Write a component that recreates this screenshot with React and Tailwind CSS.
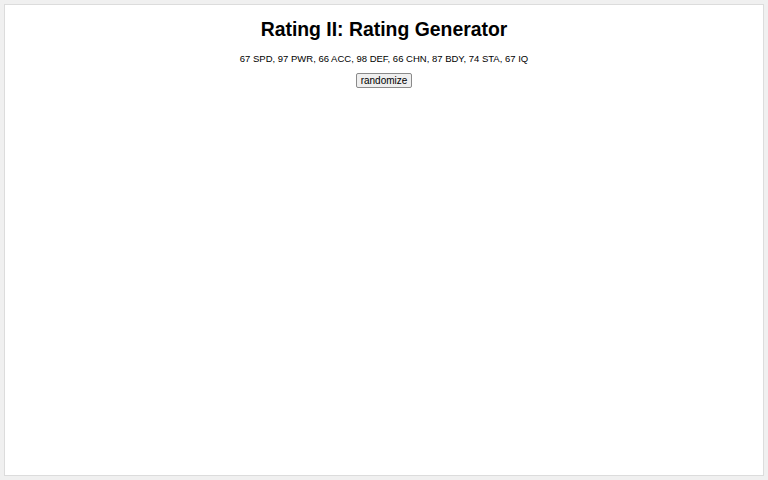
export default function App() {
  return (
    <div className="h-[480px] w-[768px] bg-[#f0f0f0] p-[4px] font-['Liberation_Sans',Arial,sans-serif] text-black">
      <div className="flex h-full flex-col items-center border border-[#dcdcdc] bg-white">
        <h1 className="mt-[13px] text-[19.4px] font-bold leading-[23px]">Rating II: Rating Generator</h1>
        <p className="mt-[12px] text-[9.5px] leading-[12px]">
          67 SPD, 97 PWR, 66 ACC, 98 DEF, 66 CHN, 87 BDY, 74 STA, 67 IQ
        </p>
        <button className="mt-[8px] h-[15px] rounded-[2px] border border-[#8a8a8a] bg-[#efefef] px-[4px] text-[10px] leading-[12px]">
          randomize
        </button>
      </div>
    </div>
  );
}
